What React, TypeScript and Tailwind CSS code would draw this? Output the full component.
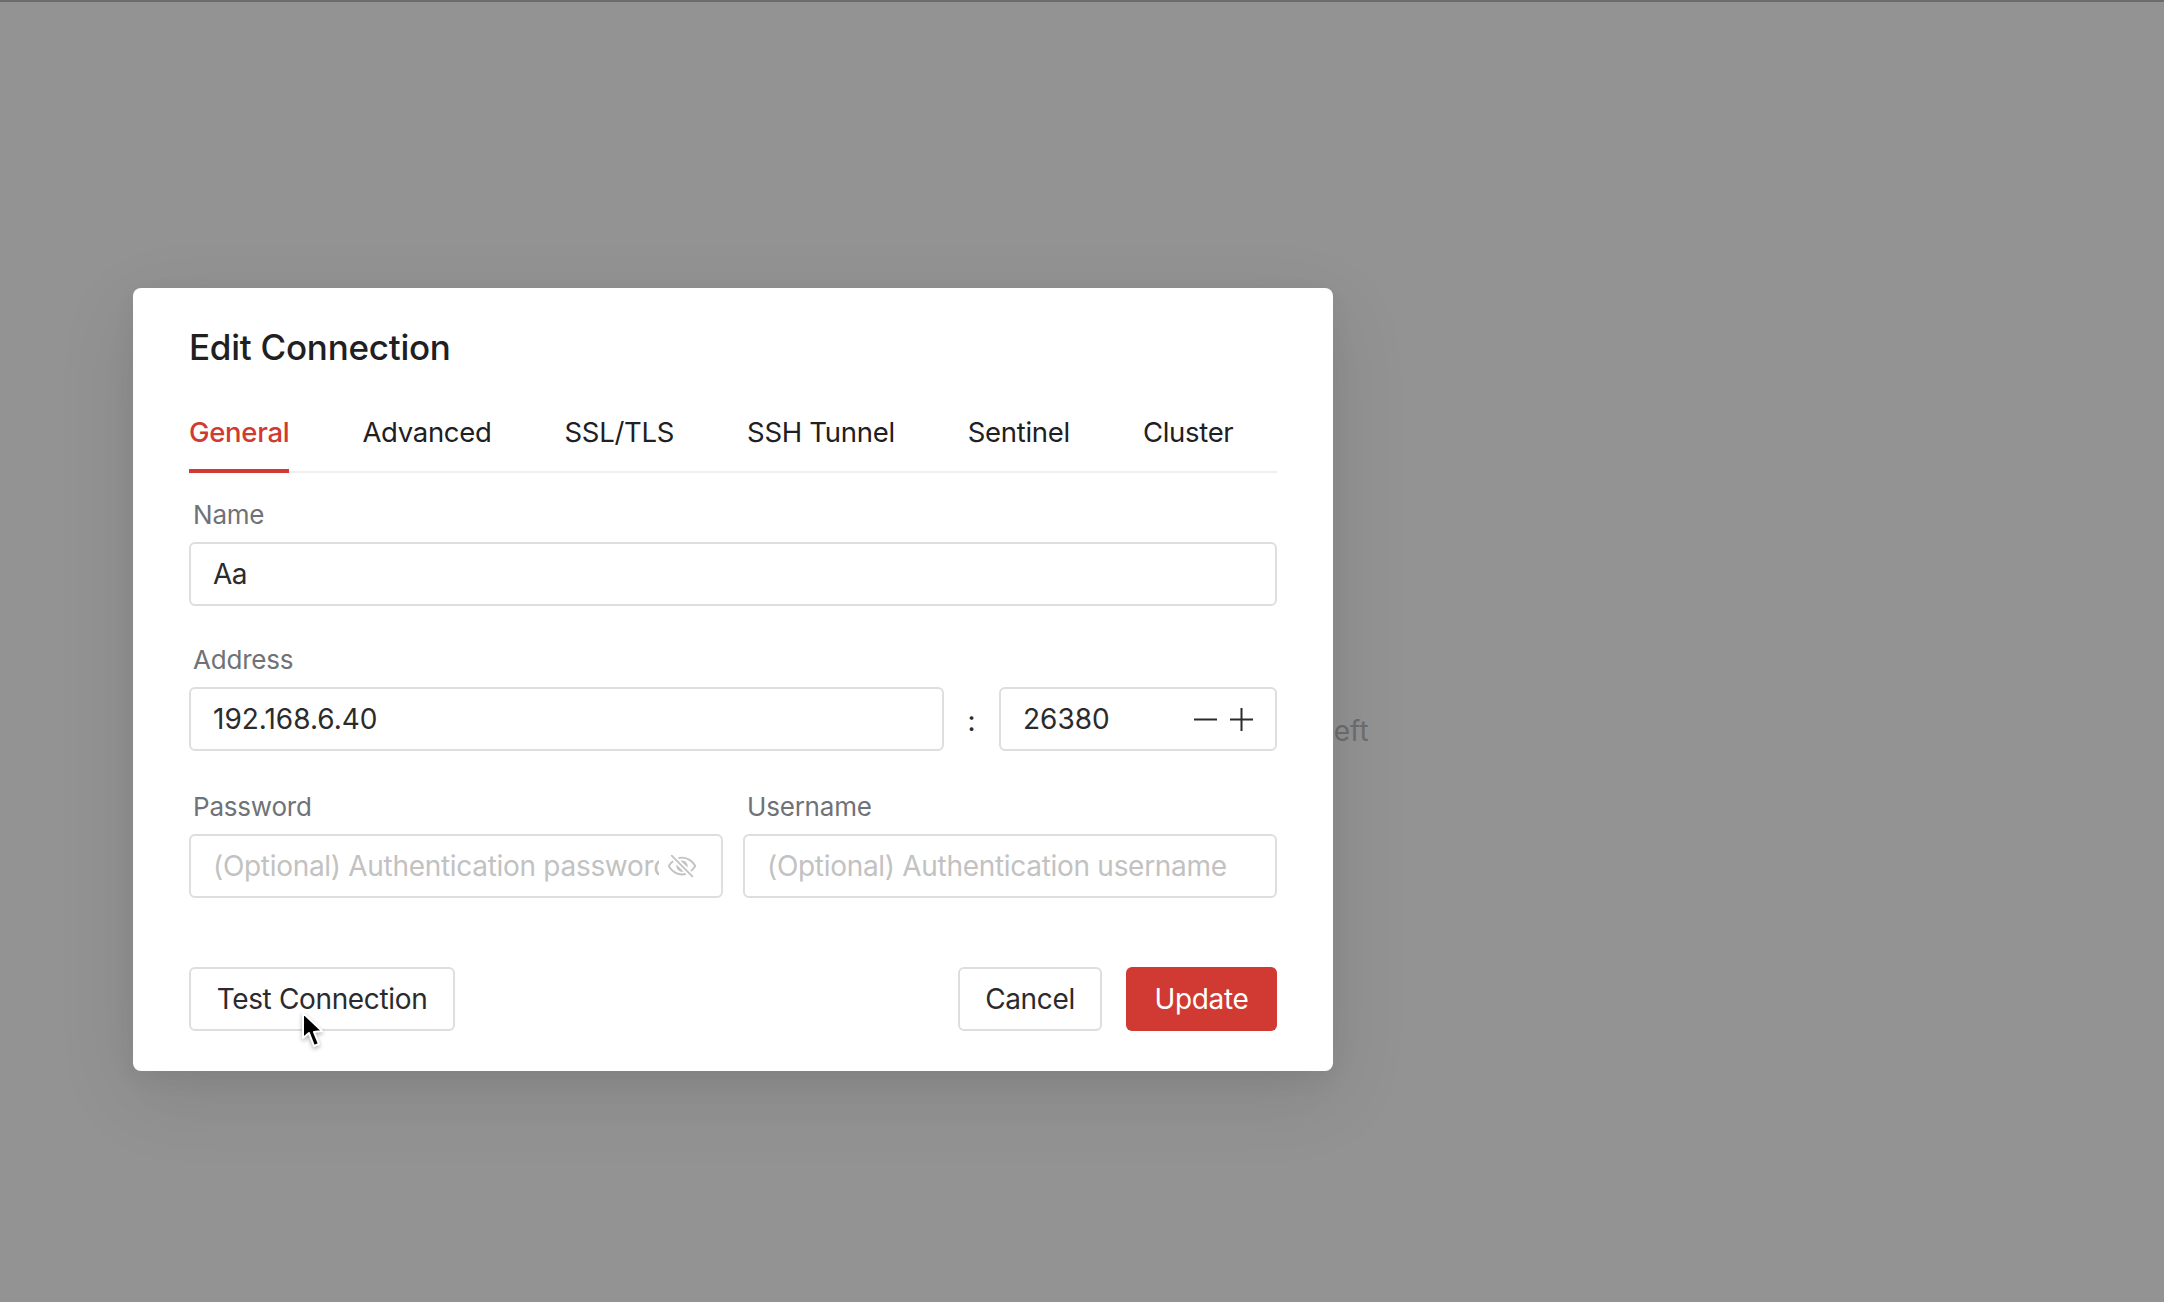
import { IoEyeOffOutline } from "react-icons/io5";

const tabs = ["General", "Advanced", "SSL/TLS", "SSH Tunnel", "Sentinel", "Cluster"];

const inputBox = "flex h-[64px] items-center rounded-[6px] border-2 border-[#dedede] bg-white pl-[16px] pr-[24px]";
const inputText =
  "w-full min-w-0 bg-transparent pl-[6px] text-[28px] text-[#2b2b2d] outline-none placeholder:text-[#c2c2c2]";
const buttonText = "text-[28px] tracking-[-0.35px]";

function Label({ children }: { children: string }) {
  return <div className="mb-[10px] h-[36px] pl-[4px] text-[26px] leading-[38px] tracking-[-0.2px] text-[#6f7277]">{children}</div>;
}

export default function App() {
  return (
    <div className="relative h-[1302px] overflow-hidden border-t-2 border-[#6c6c6c] bg-[#939393] pl-[133px] pt-[286px] font-['Inter',sans-serif]">
      <span className="absolute left-[1327px] top-[711px] text-[28px] leading-[36px] text-[#6c6e70]">left</span>

      <div className="relative flex h-[783px] w-[1200px] flex-col rounded-[8px] bg-white px-[56px] pt-[35px] shadow-[0_24px_80px_rgba(0,0,0,0.1),0_8px_24px_rgba(0,0,0,0.05)]">
        <h1 className="h-[48px] text-[35px] font-medium leading-[48px] tracking-[-0.25px] text-[#1f2022]">Edit Connection</h1>

        <div className="mt-[29px] flex h-[73px] gap-[73px] border-b-2 border-[#efefef]">
          {tabs.map((t, i) => (
            <div
              key={t}
              className={
                i === 0
                  ? "h-[73px] border-b-[4px] border-[#d03a32] pt-[12px] text-[27.5px] font-medium leading-[40px] tracking-[-0.3px] text-[#d03a32]"
                  : "pt-[12px] text-[27.5px] leading-[40px] tracking-[-0.3px] text-[#1f2022]"
              }
            >
              {t}
            </div>
          ))}
        </div>

        <div className="mt-[23px]">
          <Label>Name</Label>
          <div className={inputBox}>
            <input readOnly value="Aa" className={`${inputText} tracking-[-0.5px]`} />
          </div>
        </div>

        <div className="mt-[35px]">
          <Label>Address</Label>
          <div className="flex items-center">
            <div className={`${inputBox} w-[755px]`}>
              <input readOnly value="192.168.6.40" className={inputText} />
            </div>
            <div className="w-[55px] pt-[4px] text-center text-[28px] text-[#2b2b2d]">:</div>
            <div className={`${inputBox} w-[278px] !pr-[22px]`}>
              <input readOnly value="26380" className={inputText} />
              <div className="flex shrink-0 items-center gap-[13px]">
                <svg width="23" height="23" viewBox="0 0 23 23" fill="none" stroke="#2b2b2d" strokeWidth="2">
                  <path d="M0 11.5h23" />
                </svg>
                <svg width="23" height="23" viewBox="0 0 23 23" fill="none" stroke="#2b2b2d" strokeWidth="2">
                  <path d="M0 11.5h23M11.5 0v23" />
                </svg>
              </div>
            </div>
          </div>
        </div>

        <div className="mt-[37px] flex gap-[20px]">
          <div className="w-[534px]">
            <Label>Password</Label>
            <div className={inputBox}>
              <input readOnly placeholder="(Optional) Authentication password" className={`${inputText} tracking-[-0.3px]`} />
              <IoEyeOffOutline className="ml-[8px] shrink-0 text-[30px] text-[#c2c2c2]" />
            </div>
          </div>
          <div className="w-[534px]">
            <Label>Username</Label>
            <div className={inputBox}>
              <input readOnly placeholder="(Optional) Authentication username" className={`${inputText} tracking-[-0.3px]`} />
            </div>
          </div>
        </div>

        <div className="mt-[69px] flex items-center">
          <button className={`h-[64px] w-[266px] rounded-[6px] border-2 border-[#dedede] bg-white text-[#2b2b2d] ${buttonText}`}>
            Test Connection
          </button>
          <button className={`ml-auto h-[64px] w-[144px] rounded-[6px] border-2 border-[#dedede] bg-white text-[#2b2b2d] ${buttonText}`}>
            Cancel
          </button>
          <button className={`ml-[24px] h-[64px] w-[151px] rounded-[6px] bg-[#d03a32] text-white ${buttonText}`}>
            Update
          </button>
        </div>
      </div>

      {/* mouse pointer caught in the recording */}
      <svg className="absolute left-[300px] top-[1009px] drop-shadow-[0_2px_2px_rgba(0,0,0,0.3)]" width="26" height="40" viewBox="0 0 26 40">
        <path d="M3 2 L3 27 L9 22 L14 35 L19 33 L14 21 L22 20 Z" fill="#000" stroke="#fff" strokeWidth="2" strokeLinejoin="round" />
      </svg>
    </div>
  );
}
